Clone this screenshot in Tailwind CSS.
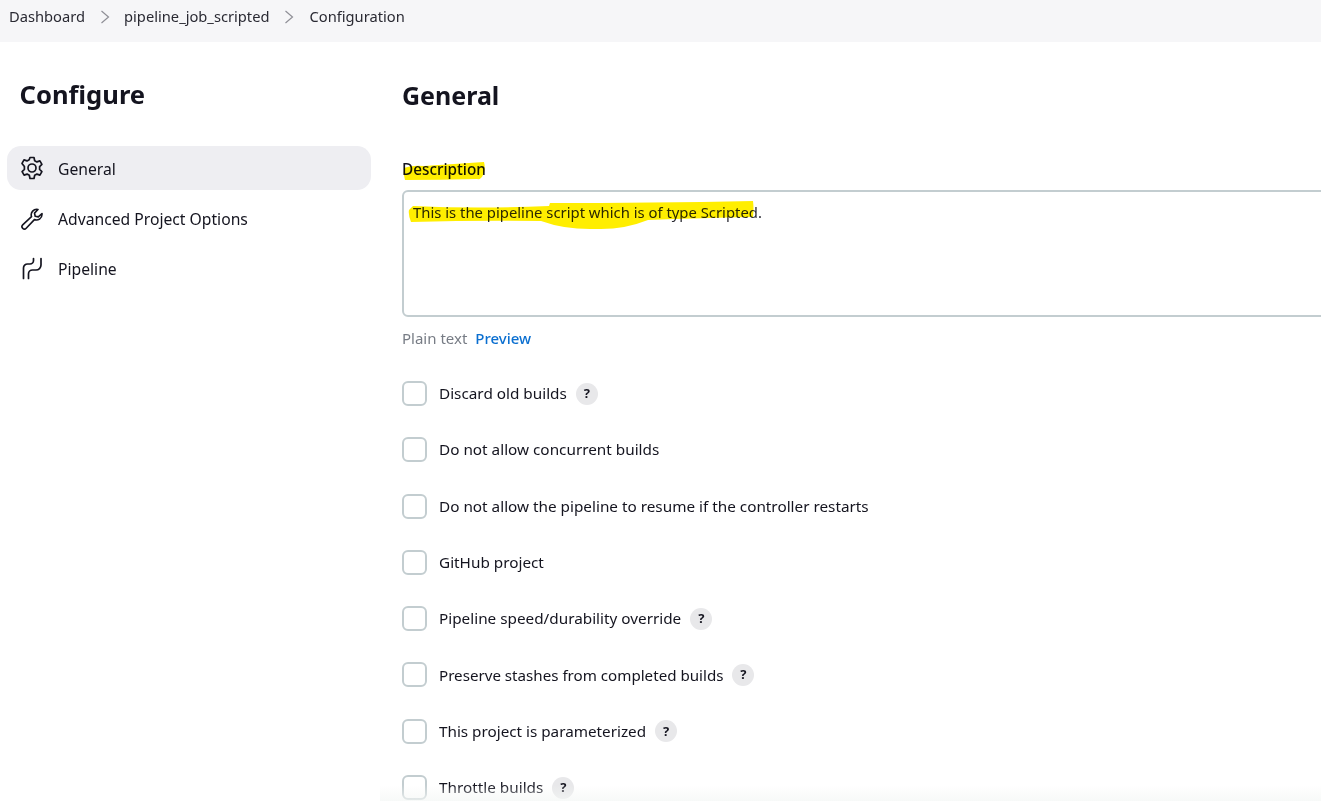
<!DOCTYPE html>
<html>
<head>
    <script src="https://cdn.jsdelivr.net/npm/@tailwindcss/browser@4"></script>
    <title>Configuration</title>
</head>
<body class="h-[801px] w-[1321px] overflow-hidden bg-white font-['Noto_Sans',sans-serif] text-[15.3px] text-[#14141f]">
    <!-- Breadcrumb -->
    <div class="flex h-[42px] items-center bg-[#f6f6f8] pb-[9px] pl-[9px] text-[14.7px] text-[#2a2a33]">
        <span>Dashboard</span>
        <svg class="mx-[13.5px] h-[14px] w-[12px]" viewBox="0 0 12 14" fill="none" stroke="#8f8f96" stroke-width="1.2"><path d="M2.5 1l7 6-7 6"/></svg>
        <span>pipeline_job_scripted</span>
        <svg class="mx-[14px] h-[14px] w-[12px]" viewBox="0 0 12 14" fill="none" stroke="#8f8f96" stroke-width="1.2"><path d="M2.5 1l7 6-7 6"/></svg>
        <span>Configuration</span>
    </div>

    <div class="flex">
        <!-- Sidebar -->
        <div class="w-[402px] shrink-0 pl-[7px]">
            <h1 class="mt-[33px] ml-[12.5px] text-[25.6px] leading-[40px] font-bold">Configure</h1>
            <div class="mt-[31px] flex w-[364px] flex-col gap-[6px] text-[15.7px]">
                <div class="flex h-[44px] items-center gap-[14px] rounded-[14px] bg-[#eeeef2] pl-[13px]">
                    <svg class="h-[24px] w-[24px]" viewBox="0 0 24 24" fill="none" stroke="#14141f" stroke-width="1.7" stroke-linejoin="round"><path d="M10 1.500h4l.7 3.200 2.200 1.200 3-1 2 3.500-2.300 2.200v2.800l2.300 2.200-2 3.500-3-1-2.200 1.200-.7 3.200h-4l-.7-3.200-2.200-1.200-3 1-2-3.500 2.300-2.200v-2.800L2 7.400l2-3.500 3 1 2.200-1.200z"/><circle cx="12" cy="12" r="4"/></svg>
                    <span class="pt-[4px]">General</span>
                </div>
                <div class="flex h-[44px] items-center gap-[14px] pl-[13px]">
                    <svg class="mt-[2px] h-[24px] w-[24px]" viewBox="0 0 24 24" fill="none" stroke="#14141f" stroke-width="1.6" stroke-linejoin="round"><path d="M22 7.500a5.500 5.500 0 0 1-7.600 5.100L6.200 21.300a2.400 2.400 0 0 1-3.500-3.400l8.800-8.300A5.500 5.500 0 0 1 18 2.500l-3.500 3.600.7 3.100 3.100.7L22 6.500z"/></svg>
                    <span class="pt-[4px]">Advanced Project Options</span>
                </div>
                <div class="flex h-[44px] items-center gap-[14px] pl-[13px]">
                    <svg class="mt-[2px] h-[24px] w-[24px]" viewBox="0 0 24 24" fill="none" stroke="#14141f" stroke-width="1.7" stroke-linecap="round"><path d="M3.500 21.500V11a4 4 0 0 1 4-4h2.500a3.500 3.500 0 0 0 3.500-3.500V1.500M8.500 21.500V17a4 4 0 0 1 4-4h3.500a5 5 0 0 0 5-5V1.500"/></svg>
                    <span class="pt-[4px]">Pipeline</span>
                </div>
            </div>
        </div>

        <!-- Main form -->
        <div class="relative min-w-0 flex-1">
            <h1 class="mt-[33px] text-[25px] leading-[40px] font-bold">General</h1>
            <div class="mt-[42px] leading-[24px] font-medium">Description</div>
            <div class="mt-[9px] -mr-[10px] h-[127px] rounded-[6px] border-2 border-[#c3cdd0] px-[9px] py-[8px] text-[14.85px] leading-[24px] text-[#2a2a33]">This is the pipeline script which is of type Scripted.</div>
            <div class="mt-[9px] flex gap-[8px] leading-[24px]">
                <span class="text-[15px] text-[#777c85]">Plain text</span>
                <span class="text-[15px] font-medium text-[#0b6fd0]">Preview</span>
            </div>

            <div class="mt-[31px] flex flex-col gap-[31.300px]">
                <div class="flex h-[25px] items-center">
                    <div class="h-[25px] w-[25px] rounded-[6px] border-2 border-[#c3cdd0]"></div>
                    <span class="ml-[12px]">Discard old builds</span>
                    <span class="ml-[9px] flex h-[22px] w-[22px] items-center justify-center rounded-full bg-[#e8e8ea] text-[13px] font-bold">?</span>
                </div>
                <div class="flex h-[25px] items-center">
                    <div class="h-[25px] w-[25px] rounded-[6px] border-2 border-[#c3cdd0]"></div>
                    <span class="ml-[12px]">Do not allow concurrent builds</span>
                </div>
                <div class="flex h-[25px] items-center">
                    <div class="h-[25px] w-[25px] rounded-[6px] border-2 border-[#c3cdd0]"></div>
                    <span class="ml-[12px]">Do not allow the pipeline to resume if the controller restarts</span>
                </div>
                <div class="flex h-[25px] items-center">
                    <div class="h-[25px] w-[25px] rounded-[6px] border-2 border-[#c3cdd0]"></div>
                    <span class="ml-[12px]">GitHub project</span>
                </div>
                <div class="flex h-[25px] items-center">
                    <div class="h-[25px] w-[25px] rounded-[6px] border-2 border-[#c3cdd0]"></div>
                    <span class="ml-[12px]">Pipeline speed/durability override</span>
                    <span class="ml-[9px] flex h-[22px] w-[22px] items-center justify-center rounded-full bg-[#e8e8ea] text-[13px] font-bold">?</span>
                </div>
                <div class="flex h-[25px] items-center">
                    <div class="h-[25px] w-[25px] rounded-[6px] border-2 border-[#c3cdd0]"></div>
                    <span class="ml-[12px] text-[15.15px]">Preserve stashes from completed builds</span>
                    <span class="ml-[9px] flex h-[22px] w-[22px] items-center justify-center rounded-full bg-[#e8e8ea] text-[13px] font-bold">?</span>
                </div>
                <div class="flex h-[25px] items-center">
                    <div class="h-[25px] w-[25px] rounded-[6px] border-2 border-[#c3cdd0]"></div>
                    <span class="ml-[12px] text-[15.25px]">This project is parameterized</span>
                    <span class="ml-[9px] flex h-[22px] w-[22px] items-center justify-center rounded-full bg-[#e8e8ea] text-[13px] font-bold">?</span>
                </div>
                <div class="flex h-[25px] items-center">
                    <div class="h-[25px] w-[25px] rounded-[6px] border-2 border-[#c3cdd0]"></div>
                    <span class="ml-[12px]">Throttle builds</span>
                    <span class="ml-[9px] flex h-[22px] w-[22px] items-center justify-center rounded-full bg-[#e8e8ea] text-[13px] font-bold">?</span>
                </div>
            </div>
        </div>
    </div>

    <!-- Marker highlights drawn on top of the text -->
    <svg class="pointer-events-none absolute top-0 left-0 mix-blend-multiply" width="1321" height="801" fill="#ffee00">
        <path d="M404 168q8 -3 20 -2q30 -2 60 -4q2 7 -1 13q-2 5 -6 4q-35 1 -72 1q-2 -6 -1 -12z"/>
        <path d="M413 206q65 3 136 0l1 -3q100 0 203 -2q1 8 0 16q-50 1 -105 3q-25 10 -52 9q-30 1 -55 -8q-60 -1 -130 1q-3 -8 -2 -12z"/>
    </svg>
    <!-- Bottom fade of the sticky action bar -->
    <div class="pointer-events-none absolute bottom-0 left-[380px] h-[16px] w-[941px] bg-gradient-to-t from-[#f4f7f5]/70 to-transparent"></div>
</body>
</html>
